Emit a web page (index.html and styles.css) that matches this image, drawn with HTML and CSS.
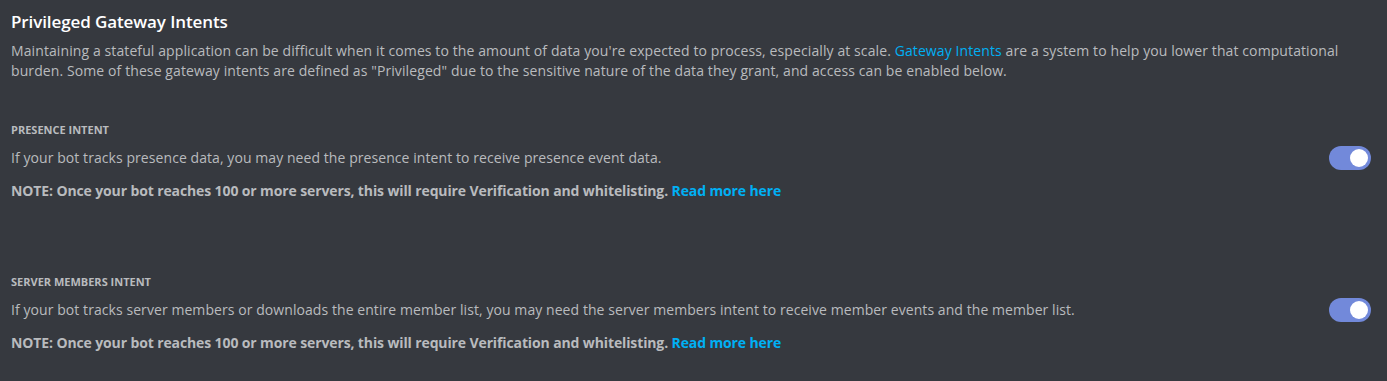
FILE: index.html
```html
<!DOCTYPE html>
<html lang="en">
<head>
	<meta charset="UTF-8">
	<title>Privileged Gateway Intents</title>
	<link rel="stylesheet" href="styles.css">
</head>
<body>
	<div class="intents">
		<h2 class="title">Privileged Gateway Intents</h2>
		<p class="lead">Maintaining a stateful application can be difficult when it comes to the amount of data you're expected to process, especially at scale. <a href="##">Gateway Intents</a> are a system to help you lower that computational burden. Some of these gateway intents are defined as "Privileged" due to the sensitive nature of the data they grant, and access can be enabled below.</p>

		<div class="intent">
			<h5 class="label">Presence Intent</h5>
			<div class="row">
				<span class="desc">If your bot tracks presence data, you may need the presence intent to receive presence event data.</span>
				<span class="switch on"><span class="knob"></span></span>
			</div>
			<p class="note">NOTE: Once your bot reaches 100 or more servers, this will require Verification and whitelisting. <a href="##">Read more here</a></p>
		</div>

		<div class="intent second">
			<h5 class="label">Server Members Intent</h5>
			<div class="row">
				<span class="desc">If your bot tracks server members or downloads the entire member list, you may need the server members intent to receive member events and the member list.</span>
				<span class="switch on"><span class="knob"></span></span>
			</div>
			<p class="note">NOTE: Once your bot reaches 100 or more servers, this will require Verification and whitelisting. <a href="##">Read more here</a></p>
		</div>
	</div>
</body>
</html>
```

FILE: styles.css
```css
*{
	margin: 0;
	padding: 0;
	box-sizing: border-box;
}
body{
	background-color: #36393f;
	font-family: 'Open Sans', 'Noto Sans', sans-serif;
	color: #b9bbbe;
}
a{
	color: #00b0f4;
	text-decoration: none;
}
.intents{
	padding: 10px 16px 0 11px;
}
.title{
	font-size: 17px;
	line-height: 23px;
	font-weight: 600;
	letter-spacing: -0.1px;
	color: #fff;
}
.lead{
	margin-top: 8px;
	font-size: 14px;
	line-height: 20px;
	letter-spacing: 0.1px;
}
.intent{
	margin-top: 41px;
}
.intent.second{
	margin-top: 73px;
}
.label{
	font-size: 11px;
	line-height: 16px;
	font-weight: 700;
	text-transform: uppercase;
}
.row{
	display: flex;
	align-items: center;
	justify-content: space-between;
	margin-top: 8px;
	height: 24px;
}
.desc{
	font-size: 14px;
	line-height: 20px;
	letter-spacing: 0.07px;
}
.note{
	margin-top: 11px;
	font-size: 14px;
	line-height: 20px;
	font-weight: 700;
	letter-spacing: -0.12px;
}
.switch{
	position: relative;
	flex: none;
	width: 42px;
	height: 24px;
	border-radius: 12px;
	background-color: #7289da;
}
.knob{
	position: absolute;
	top: 3px;
	right: 3px;
	width: 18px;
	height: 18px;
	border-radius: 50%;
	background-color: #fff;
}
```
